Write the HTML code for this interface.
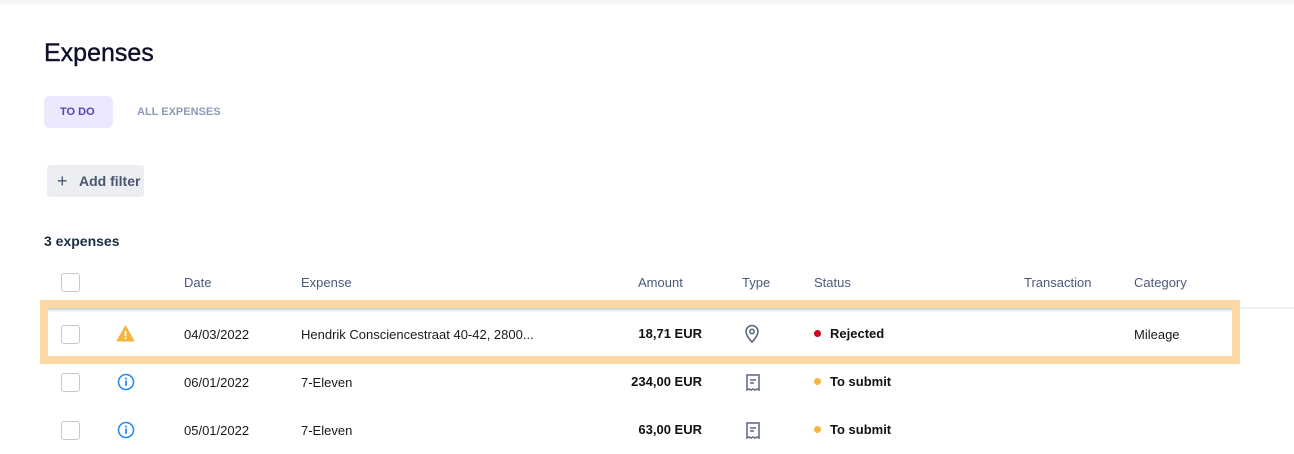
<!DOCTYPE html>
<html><head><style>
*{margin:0;padding:0;box-sizing:border-box}
body{width:1294px;height:454px;background:#fff;font-family:"Liberation Sans",sans-serif;position:relative;overflow:hidden;color:#111}
.a{position:absolute;white-space:nowrap}
.cb{position:absolute;width:19px;height:19px;border:1px solid #c3c8d2;border-radius:3px;background:#fff}
.h{font-size:13px;color:#4a5b7a;top:275px}
.t{font-size:13px;color:#1a1a1a}
.b{font-weight:bold;font-size:13px;color:#111}
.amt{right:592px;text-align:right}
.dot{position:absolute;width:7px;height:7px;border-radius:50%}
</style></head><body>
<div class="a" style="left:0;top:0;width:1294px;height:6px;background:linear-gradient(#eef0f4,#fff)"></div>
<div class="a" style="left:44px;top:39px;font-size:25px;color:#0d0f2b;-webkit-text-stroke:0.4px #0d0f2b">Expenses</div>
<div class="a" style="left:44px;top:96px;width:69px;height:32px;background:#ece9fe;border-radius:5px"></div>
<div class="a" style="left:60px;top:106px;font-size:11px;font-weight:bold;color:#5b3fb5">TO DO</div>
<div class="a" style="left:137px;top:106px;font-size:11px;font-weight:bold;color:#8a9ab8">ALL EXPENSES</div>
<div class="a" style="left:47px;top:165px;width:97px;height:32px;background:#edeef1;border-radius:3px"></div>
<div class="a" style="left:57px;top:171px;font-size:18px;color:#4a5670">+</div>
<div class="a" style="left:79px;top:173px;font-size:14px;font-weight:bold;color:#4a5670">Add filter</div>
<div class="a" style="left:44px;top:233px;font-size:14px;font-weight:bold;color:#1d2b48">3 expenses</div>
<div class="cb" style="left:61px;top:273px"></div>
<div class="a h" style="left:184px">Date</div>
<div class="a h" style="left:301px">Expense</div>
<div class="a h" style="left:638px">Amount</div>
<div class="a h" style="left:742px">Type</div>
<div class="a h" style="left:814px">Status</div>
<div class="a h" style="left:1024px">Transaction</div>
<div class="a h" style="left:1134px">Category</div>
<div class="a" style="left:1240px;top:307px;width:54px;height:2px;background:#eef0f4"></div>
<div class="a" style="left:40px;top:300px;width:1200px;height:64px;border:8px solid #fdd7a4;background:#fff"></div>
<div class="a" style="left:48px;top:308px;width:1184px;height:4px;background:linear-gradient(#c8c8c8,#fff)"></div>
<div class="cb" style="left:61px;top:325px"></div>
<svg class="a" style="left:116px;top:325px" width="19" height="17" viewBox="0 0 19 17"><path d="M9.5 1L18 16H1z" fill="#f5b53f" stroke="#f5b53f" stroke-linejoin="round"/><rect x="8.6" y="6" width="1.8" height="5" fill="#fff"/><rect x="8.6" y="12.2" width="1.8" height="1.8" fill="#fff"/></svg>
<div class="a t" style="left:184px;top:327px">04/03/2022</div>
<div class="a t" style="left:301px;top:327px">Hendrik Consciencestraat 40-42, 2800...</div>
<div class="a b amt" style="top:326px">18,71 EUR</div>
<svg class="a" style="left:744px;top:324px" width="16" height="20" viewBox="0 0 16 20"><path d="M8 18C8 18 2 12 2 7.5A6 6 0 0 1 14 7.5C14 12 8 18 8 18Z" fill="none" stroke="#5a6580" stroke-width="1.6"/><circle cx="8" cy="7.5" r="2.2" fill="none" stroke="#5a6580" stroke-width="1.5"/></svg>
<div class="dot" style="left:814px;top:330px;background:#d0021b"></div>
<div class="a b" style="left:830px;top:326px">Rejected</div>
<div class="a t" style="left:1134px;top:327px">Mileage</div>
<div class="cb" style="left:61px;top:373px"></div>
<svg class="a" style="left:117px;top:373px" width="18" height="18" viewBox="0 0 18 18"><circle cx="9" cy="9" r="7.5" fill="none" stroke="#2a8ee8" stroke-width="1.6"/><rect x="8.1" y="7.5" width="1.8" height="5.5" fill="#2a8ee8"/><rect x="8.1" y="4.6" width="1.8" height="1.8" fill="#2a8ee8"/></svg>
<div class="a t" style="left:184px;top:375px">06/01/2022</div>
<div class="a t" style="left:301px;top:375px">7-Eleven</div>
<div class="a b amt" style="top:374px">234,00 EUR</div>
<svg class="a" style="left:745px;top:374px" width="16" height="18" viewBox="0 0 16 18"><path d="M2 1H14V16L12 15L10 16L8 15L6 16L4 15L2 16Z" fill="none" stroke="#5a6580" stroke-width="1.5"/><path d="M5 6H11M5 9H9" stroke="#5a6580" stroke-width="1.5"/></svg>
<div class="dot" style="left:814px;top:378px;background:#f5b53f"></div>
<div class="a b" style="left:830px;top:374px">To submit</div>
<div class="cb" style="left:61px;top:421px"></div>
<svg class="a" style="left:117px;top:421px" width="18" height="18" viewBox="0 0 18 18"><circle cx="9" cy="9" r="7.5" fill="none" stroke="#2a8ee8" stroke-width="1.6"/><rect x="8.1" y="7.5" width="1.8" height="5.5" fill="#2a8ee8"/><rect x="8.1" y="4.6" width="1.8" height="1.8" fill="#2a8ee8"/></svg>
<div class="a t" style="left:184px;top:423px">05/01/2022</div>
<div class="a t" style="left:301px;top:423px">7-Eleven</div>
<div class="a b amt" style="top:422px">63,00 EUR</div>
<svg class="a" style="left:745px;top:422px" width="16" height="18" viewBox="0 0 16 18"><path d="M2 1H14V16L12 15L10 16L8 15L6 16L4 15L2 16Z" fill="none" stroke="#5a6580" stroke-width="1.5"/><path d="M5 6H11M5 9H9" stroke="#5a6580" stroke-width="1.5"/></svg>
<div class="dot" style="left:814px;top:426px;background:#f5b53f"></div>
<div class="a b" style="left:830px;top:422px">To submit</div>
</body></html>
